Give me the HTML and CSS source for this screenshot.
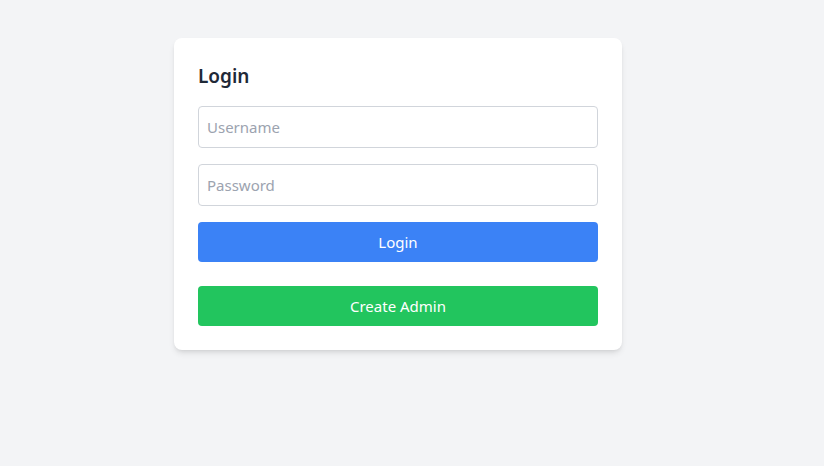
FILE: index.html
```html
<!DOCTYPE html>
<html lang="en">
<head>
    <meta charset="UTF-8">
    <meta name="viewport" content="width=device-width, initial-scale=1.0">
    <title>Login</title>
    <link rel="stylesheet" href="styles.css">
</head>
<body>
    <div class="page">
        <div class="card">
            <h2>Login</h2>
            <form class="login-form" onsubmit="return false">
                <input type="text" id="username" placeholder="Username">
                <input type="password" id="password" placeholder="Password">
                <button type="submit" class="btn btn-blue">Login</button>
                <button type="button" class="btn btn-green">Create Admin</button>
            </form>
        </div>
    </div>
</body>
</html>
```

FILE: styles.css
```css
* {
    margin: 0;
    padding: 0;
    box-sizing: border-box;
    font-family: 'Noto Sans', 'Open Sans', sans-serif;
}

body {
    background: #f3f4f6;
    min-height: 100vh;
}

.page {
    padding: 38px 0 0 174px;
}

.card {
    width: 448px;
    background: #fff;
    border-radius: 8px;
    padding: 24px;
    box-shadow: 0 4px 6px -1px rgba(0, 0, 0, 0.1), 0 2px 4px -2px rgba(0, 0, 0, 0.1);
}

h2 {
    font-size: 19px;
    line-height: 28px;
    font-weight: 600;
    color: #1f2937;
    margin-bottom: 16px;
}

.login-form {
    display: flex;
    flex-direction: column;
}

input {
    width: 100%;
    height: 42px;
    padding: 8px;
    border: 1px solid #d1d5db;
    border-radius: 4px;
    font-size: 15px;
    color: #111827;
    margin-bottom: 16px;
    outline: none;
}

input::placeholder {
    color: #9ca3af;
}

.btn {
    width: 100%;
    height: 40px;
    border: none;
    border-radius: 4px;
    color: #fff;
    font-size: 15px;
    cursor: pointer;
}

.btn-blue {
    background: #3b82f6;
    margin-bottom: 24px;
}

.btn-green {
    background: #22c55e;
}
```
